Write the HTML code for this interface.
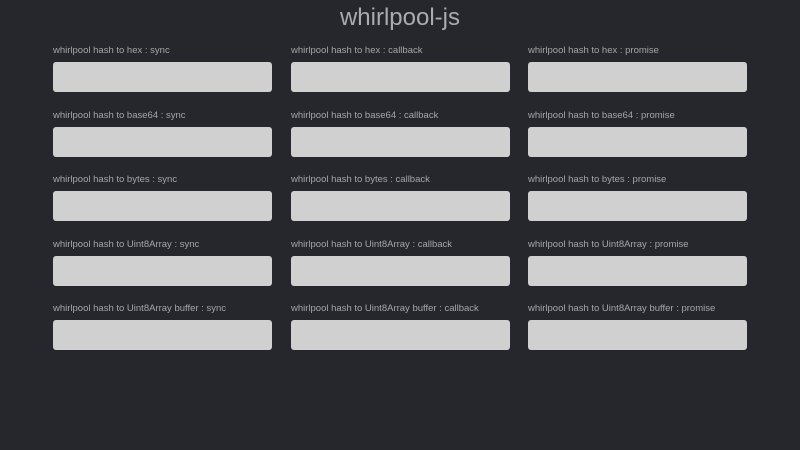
<!DOCTYPE html>
<html><head><style>
body{margin:0;width:800px;height:450px;background:#25272c;font-family:"Liberation Sans",sans-serif;overflow:hidden;position:relative}
h1{position:absolute;top:3px;left:0;width:800px;text-align:center;margin:0;font-weight:normal;font-size:24px;color:#a9abaf;line-height:30px}
.c{position:absolute;width:219px}
.c span{display:block;font-size:9.5px;color:#a4a6aa;height:17px;line-height:12px;white-space:nowrap}
.c div{height:30px;background:#d0d0d0;border-radius:3px}
</style></head><body>
<h1>whirlpool-js</h1>
<div class="c" style="left:53px;top:45px"><span>whirlpool hash to hex : sync</span><div></div></div>
<div class="c" style="left:291px;top:45px"><span>whirlpool hash to hex : callback</span><div></div></div>
<div class="c" style="left:528px;top:45px"><span>whirlpool hash to hex : promise</span><div></div></div>
<div class="c" style="left:53px;top:110px"><span>whirlpool hash to base64 : sync</span><div></div></div>
<div class="c" style="left:291px;top:110px"><span>whirlpool hash to base64 : callback</span><div></div></div>
<div class="c" style="left:528px;top:110px"><span>whirlpool hash to base64 : promise</span><div></div></div>
<div class="c" style="left:53px;top:174px"><span>whirlpool hash to bytes : sync</span><div></div></div>
<div class="c" style="left:291px;top:174px"><span>whirlpool hash to bytes : callback</span><div></div></div>
<div class="c" style="left:528px;top:174px"><span>whirlpool hash to bytes : promise</span><div></div></div>
<div class="c" style="left:53px;top:239px"><span>whirlpool hash to Uint8Array : sync</span><div></div></div>
<div class="c" style="left:291px;top:239px"><span>whirlpool hash to Uint8Array : callback</span><div></div></div>
<div class="c" style="left:528px;top:239px"><span>whirlpool hash to Uint8Array : promise</span><div></div></div>
<div class="c" style="left:53px;top:303px"><span>whirlpool hash to Uint8Array buffer : sync</span><div></div></div>
<div class="c" style="left:291px;top:303px"><span>whirlpool hash to Uint8Array buffer : callback</span><div></div></div>
<div class="c" style="left:528px;top:303px"><span>whirlpool hash to Uint8Array buffer : promise</span><div></div></div>
</body></html>
